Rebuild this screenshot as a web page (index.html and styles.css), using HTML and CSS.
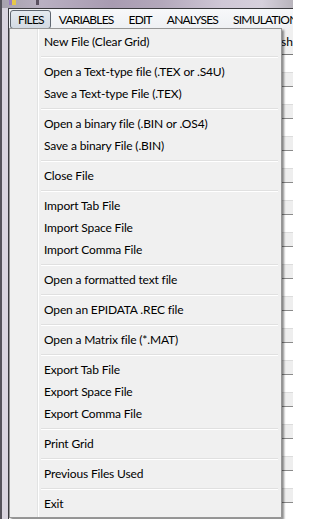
FILE: index.html
```html
<!DOCTYPE html>
<html>
<head>
<meta charset="utf-8">
<link rel="stylesheet" href="styles.css">
</head>
<body>
<div class="window">
  <div class="titlebar"><span class="appicon"></span><span class="titlemark"></span></div>
  <div class="frame">
    <nav class="menubar">
      <span class="mitem active">FILES</span>
      <span class="mitem">VARIABLES</span>
      <span class="mitem">EDIT</span>
      <span class="mitem">ANALYSES</span>
      <span class="mitem">SIMULATIONS</span>
    </nav>
    <div class="content">
      <div class="toolrow"><span class="btn">sh</span></div>
      <div class="grid"></div>
    </div>
  </div>
  <div class="dropdown">
    <div class="item">New File (Clear Grid)</div>
    <div class="sep"></div>
    <div class="item">Open a Text-type file (.TEX or .S4U)</div>
    <div class="item">Save a Text-type File (.TEX)</div>
    <div class="sep"></div>
    <div class="item">Open a binary file (.BIN or .OS4)</div>
    <div class="item">Save a binary File (.BIN)</div>
    <div class="sep"></div>
    <div class="item">Close File</div>
    <div class="sep"></div>
    <div class="item">Import Tab File</div>
    <div class="item">Import Space File</div>
    <div class="item">Import Comma File</div>
    <div class="sep"></div>
    <div class="item">Open a formatted text file</div>
    <div class="sep"></div>
    <div class="item">Open an EPIDATA .REC file</div>
    <div class="sep"></div>
    <div class="item">Open a Matrix file (*.MAT)</div>
    <div class="sep"></div>
    <div class="item">Export Tab File</div>
    <div class="item">Export Space File</div>
    <div class="item">Export Comma File</div>
    <div class="sep"></div>
    <div class="item">Print Grid</div>
    <div class="sep"></div>
    <div class="item">Previous Files Used</div>
    <div class="sep"></div>
    <div class="item">Exit</div>
  </div>
</div>
</body>
</html>
```

FILE: styles.css
```css
html, body {
  margin: 0;
  padding: 0;
  background: #ffffff;
}
body {
  font-family: "Lato", "Liberation Sans", sans-serif;
  font-size: 12px;
  color: #000;
}
.window {
  position: relative;
  width: 291px;
  height: 519px;
  display: flex;
  flex-direction: column;
  border-left: 2px solid #55525a;
  background: #d9d4de;
}
.titlebar {
  position: relative;
  height: 8px;
  background: linear-gradient(90deg, #a7a2ad 0px, #b9b0c2 40px, #a89bb1 110px, #b3a8bb 160px, #cfc7d6 220px, #d6d0dc 260px, #b8b4bc 291px);
}
.appicon {
  position: absolute;
  left: 7px;
  top: 0;
  width: 7px;
  height: 5px;
  background: linear-gradient(90deg, #9a7fc0 0 3px, #e6c84a 3px 7px);
}
.titlemark {
  position: absolute;
  left: 34px;
  top: 0;
  width: 3px;
  height: 5px;
  background: #5a5060;
}
.frame {
  flex: 1;
  margin-left: 6px;
  border-left: 1px solid #3a3a3e;
  border-top: 1px solid #3a3a3e;
  display: flex;
  flex-direction: column;
  background: #fff;
}
.menubar {
  height: 19px;
  display: flex;
  align-items: stretch;
  padding: 1px 0 0 1px;
  background: linear-gradient(#f7f8fa, #eef0f3);
  white-space: nowrap;
  overflow: hidden;
}
.mitem {
  padding: 0 6px 0 7px;
  line-height: 17px;
  font-size: 12px;
  letter-spacing: -0.8px;
  border: 1px solid transparent;
  border-radius: 3px;
}
.mitem.active {
  border-color: #5f6670;
  background: linear-gradient(#e4e9ef, #d3dae3);
}
.content {
  flex: 1;
  display: flex;
  flex-direction: column;
}
.toolrow {
  height: 25px;
  display: flex;
  justify-content: flex-end;
  align-items: center;
  border-bottom: 1px solid #7a7a7a;
  background: #f0f0f0;
  overflow: hidden;
}
.btn {
  font-size: 12px;
  margin-right: 0px;
}
.grid {
  flex: 1;
  background: repeating-linear-gradient(#ffffff 0 17px, #dcdcdc 17px 18px, #eeeeee 18px 31px, #8a8a8a 31px 32px);
}
.dropdown {
  position: absolute;
  left: 7px;
  top: 28px;
  width: 267px;
  padding: 2px;
  border: 1px solid #979797;
  background: linear-gradient(90deg, #f0f0f0 0 27px, #e2e3e3 27px 28px, #ffffff 28px 29px, #f0f0f0 29px);
  box-shadow: 2px 2px 2px rgba(0, 0, 0, 0.45);
}
.item {
  height: 22px;
  line-height: 22px;
  padding-left: 32px;
  letter-spacing: -0.15px;
  white-space: nowrap;
}
.sep {
  height: 8px;
  margin-left: 29px;
  margin-right: 1px;
  background: linear-gradient(transparent 0 3px, #e0e0e0 3px 4px, #ffffff 4px 5px, transparent 5px);
}
```
